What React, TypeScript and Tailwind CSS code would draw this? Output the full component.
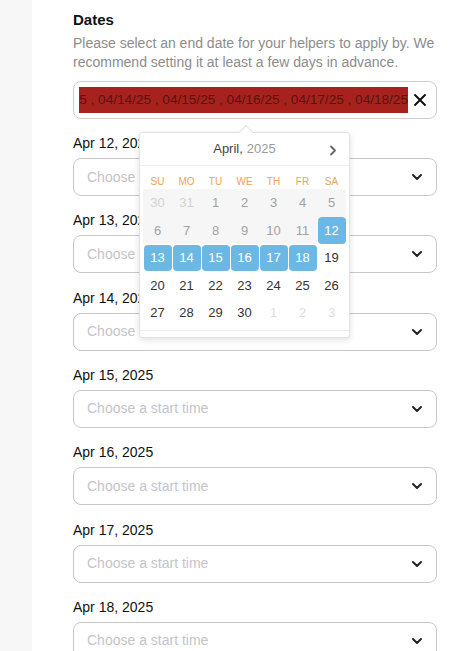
import React from "react";

const ROWS = [
  "Apr 12, 2025",
  "Apr 13, 2025",
  "Apr 14, 2025",
  "Apr 15, 2025",
  "Apr 16, 2025",
  "Apr 17, 2025",
  "Apr 18, 2025",
];

const WEEKDAYS = ["SU", "MO", "TU", "WE", "TH", "FR", "SA"];

type Day = { n: number; kind: "faint" | "past" | "sel" | "normal" | "next" };

const WEEKS: Day[][] = [
  [
    { n: 30, kind: "faint" },
    { n: 31, kind: "faint" },
    { n: 1, kind: "past" },
    { n: 2, kind: "past" },
    { n: 3, kind: "past" },
    { n: 4, kind: "past" },
    { n: 5, kind: "past" },
  ],
  [
    { n: 6, kind: "past" },
    { n: 7, kind: "past" },
    { n: 8, kind: "past" },
    { n: 9, kind: "past" },
    { n: 10, kind: "past" },
    { n: 11, kind: "past" },
    { n: 12, kind: "sel" },
  ],
  [
    { n: 13, kind: "sel" },
    { n: 14, kind: "sel" },
    { n: 15, kind: "sel" },
    { n: 16, kind: "sel" },
    { n: 17, kind: "sel" },
    { n: 18, kind: "sel" },
    { n: 19, kind: "normal" },
  ],
  [20, 21, 22, 23, 24, 25, 26].map((n) => ({ n, kind: "normal" as const })),
  [
    { n: 27, kind: "normal" },
    { n: 28, kind: "normal" },
    { n: 29, kind: "normal" },
    { n: 30, kind: "normal" },
    { n: 1, kind: "next" },
    { n: 2, kind: "next" },
    { n: 3, kind: "next" },
  ],
];

function ChevronDown() {
  return (
    <svg width="12" height="8" viewBox="0 0 12 8" fill="none">
      <path d="M2 2 L6 6 L10 2" stroke="#222" strokeWidth="2" strokeLinecap="round" strokeLinejoin="round" />
    </svg>
  );
}

function DayCell({ day }: { day: Day }) {
  if (day.kind === "sel") {
    return (
      <div className="h-[27.5px] p-[0.5px]">
        <div className="flex h-full items-center justify-center rounded-[4px] bg-[#6cb8e4] text-white">
          {day.n}
        </div>
      </div>
    );
  }
  const color =
    day.kind === "faint"
      ? "bg-[#f6f6f6] text-[#d2d2d2]"
      : day.kind === "past"
        ? "bg-[#f6f6f6] text-[#a2a2a2]"
        : day.kind === "next"
          ? "text-[#dedede]"
          : "text-[#333]";
  return (
    <div className={`flex h-[27.5px] items-center justify-center ${color}`}>{day.n}</div>
  );
}

function Calendar() {
  return (
    <div className="absolute left-[66px] top-[132px] h-[206px] w-[211px] rounded-[3px] border border-[#e2e2e2] bg-white shadow-[0_2px_6px_rgba(0,0,0,0.12)]">
      <div className="absolute left-[101px] top-[-6px] h-[10px] w-[10px] rotate-45 border-l border-t border-[#e2e2e2] bg-white" />
      <div className="relative flex h-[33px] items-center justify-center border-b border-[#eeeeee] text-[13px]">
        <span className="font-medium text-[#444]">April,</span>
        <span className="ml-[4px] text-[#9a9a9a]">2025</span>
        <svg className="absolute right-[12px] top-[12px]" width="8" height="11" viewBox="0 0 8 11" fill="none">
          <path d="M2 1.5 L6 5.5 L2 9.5" stroke="#666" strokeWidth="1.8" strokeLinecap="round" strokeLinejoin="round" />
        </svg>
      </div>
      <div className="px-[3px]">
        <div className="mt-[10px] grid grid-cols-7 text-center text-[10px] leading-[12px] text-[#f0a250]">
          {WEEKDAYS.map((w) => (
            <div key={w}>{w}</div>
          ))}
        </div>
        <div className="mt-[1px] grid grid-cols-7 text-[13px]">
          {WEEKS.flat().map((d, i) => (
            <DayCell key={i} day={d} />
          ))}
        </div>
      </div>
      <div className="mt-[3px] border-t border-[#eeeeee]" />
    </div>
  );
}

export default function App() {
  return (
    <div className="flex h-[651px] w-[474px] overflow-hidden bg-white font-['Liberation_Sans',Arial,sans-serif]">
      <div className="w-[32px] shrink-0 bg-[#f7f7f7]" />
      <div className="relative ml-[41px] w-[364px] pt-[10px]">
        <h2 className="text-[15px] font-bold leading-[20px] text-[#111]">Dates</h2>
        <p className="mt-[4px] text-[14px] leading-[19px] text-[#8c8c8c]">
          Please select an end date for your helpers to apply by. We recommend setting it at least a few days in advance.
        </p>
        <div className="mt-[9px] flex h-[38px] items-center rounded-[8px] border border-[#cccccc] pl-[5px] pr-[8px]">
          <div className="flex h-[26px] flex-1 items-center justify-end overflow-hidden whitespace-nowrap bg-[#a8221d] text-[13.6px] text-[#561410]">
            04/12/25 , 04/13/25 , 04/14/25 , 04/15/25 , 04/16/25 , 04/17/25 , 04/18/25
          </div>
          <svg className="ml-[4px]" width="16" height="16" viewBox="0 0 16 16" fill="none">
            <path d="M3 3 L13 13 M13 3 L3 13" stroke="#111" strokeWidth="2" strokeLinecap="round" />
          </svg>
        </div>
        <div className="mt-[15px] flex flex-col">
          {ROWS.map((label) => (
            <div key={label} className="pb-[15.33px]">
              <div className="text-[14px] leading-[18px] text-[#111]">{label}</div>
              <div className="mt-[6px] flex h-[38px] items-center justify-between rounded-[8px] border border-[#c8c8c8] pl-[13px] pr-[13px]">
                <span className="text-[14px] text-[#c4c4cc]">Choose a start time</span>
                <ChevronDown />
              </div>
            </div>
          ))}
        </div>
        <Calendar />
      </div>
    </div>
  );
}
